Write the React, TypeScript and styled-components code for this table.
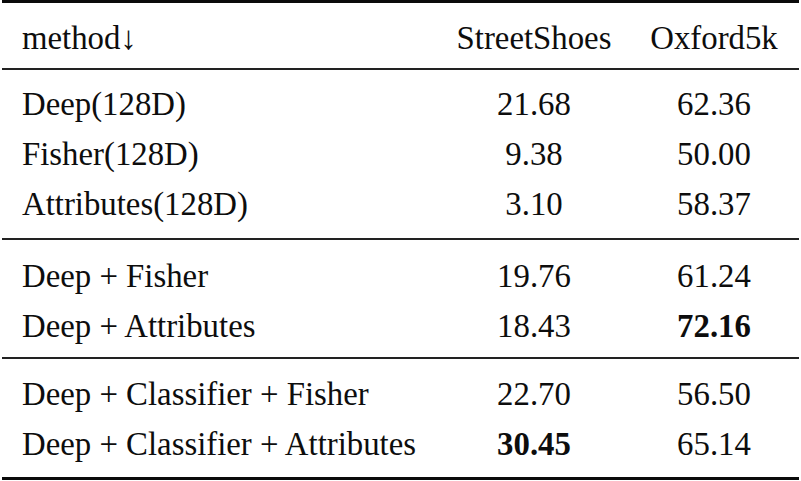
import React from "react";
import styled, { createGlobalStyle } from "styled-components";

const Global = createGlobalStyle`
  html, body { margin: 0; padding: 0; background: #fff; }
  body { font-family: "Liberation Serif", "Times New Roman", serif; color: #0d0d0d; }
`;

const Page = styled.div`
  width: 801px;
  height: 481px;
  padding: 0 2px;
  box-sizing: border-box;
  background: #fff;
  overflow: hidden;
`;

const Rule = styled.div<{ $w: number }>`
  height: ${(p) => p.$w}px;
  background: ${(p) => (p.$w > 2 ? "#0a0a0a" : "#222")};
`;

const Section = styled.div<{ $pt: number; $pb: number }>`
  padding-top: ${(p) => p.$pt}px;
  padding-bottom: ${(p) => p.$pb}px;
`;

const Row = styled.div`
  display: grid;
  grid-template-columns: 437px 190px 170px;
  height: 50px;
  line-height: 50px;
  font-size: 32.8px;
`;

const Method = styled.div`
  padding-left: 20px;
  white-space: nowrap;
`;

const Num = styled.div<{ $bold?: boolean }>`
  text-align: center;
  font-weight: ${(p) => (p.$bold ? 700 : 400)};
  white-space: nowrap;
`;

type R = { m: string; s: string; o: string; sb?: boolean; ob?: boolean };

const groups: { pt: number; pb: number; rows: R[] }[] = [
  {
    pt: 9,
    pb: 9,
    rows: [
      { m: "Deep(128D)", s: "21.68", o: "62.36" },
      { m: "Fisher(128D)", s: "9.38", o: "50.00" },
      { m: "Attributes(128D)", s: "3.10", o: "58.37" },
    ],
  },
  {
    pt: 11,
    pb: 6,
    rows: [
      { m: "Deep + Fisher", s: "19.76", o: "61.24" },
      { m: "Deep + Attributes", s: "18.43", o: "72.16", ob: true },
    ],
  },
  {
    pt: 10,
    pb: 8,
    rows: [
      { m: "Deep + Classifier + Fisher", s: "22.70", o: "56.50" },
      { m: "Deep + Classifier + Attributes", s: "30.45", o: "65.14", sb: true },
    ],
  },
];

export default function App() {
  return (
    <Page>
      <Global />
      <Rule $w={3} />
      <Section $pt={10} $pb={5}>
        <Row>
          <Method>method↓</Method>
          <Num>StreetShoes</Num>
          <Num>Oxford5k</Num>
        </Row>
      </Section>
      {groups.map((g, gi) => (
        <React.Fragment key={gi}>
          <Rule $w={2} />
          <Section $pt={g.pt} $pb={g.pb}>
            {g.rows.map((r) => (
              <Row key={r.m}>
                <Method>{r.m}</Method>
                <Num $bold={r.sb}>{r.s}</Num>
                <Num $bold={r.ob}>{r.o}</Num>
              </Row>
            ))}
          </Section>
        </React.Fragment>
      ))}
      <Rule $w={3} />
    </Page>
  );
}
